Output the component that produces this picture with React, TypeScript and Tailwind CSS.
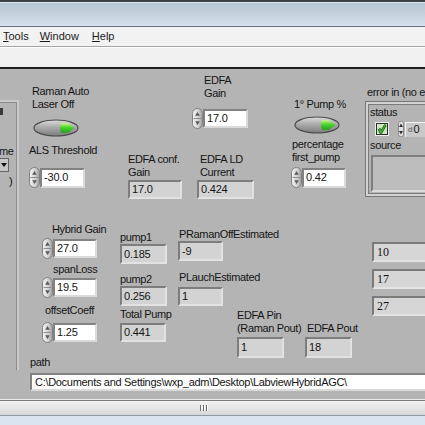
import React from "react";

// LabVIEW-style front panel window

const lbl = "whitespace-nowrap text-[11px] leading-[13px] tracking-[-0.35px] text-[#141414]";
const ctlBox =
  "flex items-center bg-white border-2 border-t-[#828282] border-l-[#828282] border-r-[#dadada] border-b-[#dadada] pl-[2px] text-[11px] leading-[13px] tracking-[-0.2px] text-[#141414] whitespace-nowrap";
const indBox =
  "flex items-center bg-[#d3d3d3] border-2 border-t-[#7d7d7d] border-l-[#7d7d7d] border-r-[#e2e2e2] border-b-[#e2e2e2] pl-[2px] text-[11px] leading-[13px] tracking-[-0.2px] text-[#141414] whitespace-nowrap";
const serifBox =
  "flex items-center w-[70px] h-[20px] bg-[#d6d6d6] border-2 border-t-[#7a7a7a] border-l-[#7a7a7a] border-r-[#e2e2e2] border-b-[#e2e2e2] pl-[3px] font-['Liberation_Serif',serif] text-[12px] leading-[13px] text-[#141414]";

function Spinner() {
  return (
    <svg width="11" height="21" viewBox="0 0 11 21" className="shrink-0">
      <defs>
        <linearGradient id="spinFill" x1="0" y1="0" x2="1" y2="0">
          <stop offset="0" stopColor="#f6f6f6" />
          <stop offset="0.6" stopColor="#cfcfcf" />
          <stop offset="1" stopColor="#9c9c9c" />
        </linearGradient>
      </defs>
      <rect x="0.5" y="0.5" width="10" height="20" rx="5" fill="url(#spinFill)" stroke="#808080" />
      <line x1="1.5" y1="10.5" x2="9.5" y2="10.5" stroke="#8e8e8e" />
      <path d="M5.5 4 L7.8 7.8 L3.2 7.8 Z" fill="#5a5a5a" />
      <path d="M5.5 17 L7.8 13.2 L3.2 13.2 Z" fill="#5a5a5a" />
    </svg>
  );
}

function NumCtl({ box, value }: { box: string; value: string }) {
  return (
    <div className="flex items-center">
      <Spinner />
      <div className={`${ctlBox} ${box}`}>{value}</div>
    </div>
  );
}

function Led() {
  return (
    <svg width="46" height="18" viewBox="0 0 46 18" className="shrink-0">
      <defs>
        <linearGradient id="ledBody" x1="0" y1="0" x2="0" y2="1">
          <stop offset="0" stopColor="#dcdcdc" />
          <stop offset="0.45" stopColor="#ababab" />
          <stop offset="1" stopColor="#7c7c7c" />
        </linearGradient>
        <linearGradient id="ledGreen" x1="0" y1="0" x2="0" y2="1">
          <stop offset="0" stopColor="#c4f58a" />
          <stop offset="0.45" stopColor="#49d52c" />
          <stop offset="1" stopColor="#24a01a" />
        </linearGradient>
      </defs>
      <ellipse cx="23" cy="9" rx="22" ry="8" fill="url(#ledBody)" stroke="#4b4b4b" strokeWidth="1.2" />
      <path d="M28 4.3 C26.6 6.5 26.6 11.5 28 13.7 L35 13.7 L41.5 9 L35 4.3 Z" fill="url(#ledGreen)" />
    </svg>
  );
}

function CheckBox() {
  return (
    <svg width="14" height="14" viewBox="0 0 14 14" className="shrink-0">
      <rect x="0.5" y="0.5" width="13" height="13" fill="#dfe9d8" stroke="#eeeeee" />
      <rect x="1.5" y="1.5" width="11" height="11" fill="#cfe6c2" stroke="#2e2e2e" />
      <path
        d="M3.2 7.6 L5.2 6.4 L6.2 8.3 L9.6 2.6 L11.2 3.6 L6.6 11.6 L5.2 11.6 Z"
        fill="#3cc02d"
        stroke="#174d12"
        strokeWidth="0.8"
        strokeLinejoin="round"
      />
    </svg>
  );
}

function MiniSpin() {
  return (
    <svg width="6" height="16" viewBox="0 0 6 16" className="shrink-0">
      <rect x="0.5" y="0.5" width="5" height="15" rx="2" fill="#e3e3e3" stroke="#8a8a8a" />
      <path d="M3 2.5 L5 6 L1 6 Z" fill="#333" />
      <path d="M3 13.5 L5 10 L1 10 Z" fill="#333" />
    </svg>
  );
}

// one front-panel object: label stacked over its control / indicator,
// dropped at its spot on the panel canvas
function Obj({ pos, children }: { pos: string; children: React.ReactNode }) {
  return <div className={`absolute flex flex-col items-start ${pos}`}>{children}</div>;
}

export default function App() {
  return (
    <div className="w-[425px] h-[425px] overflow-hidden flex flex-col font-['Liberation_Sans',Arial,sans-serif] bg-[#b4b4b4]">
      {/* title bar */}
      <div className="h-[2px] shrink-0 bg-[#3f4347]" />
      <div className="h-[25px] shrink-0 border-b border-[#67717b] bg-gradient-to-b from-[#b3c5d1] to-[#d6e1eb] shadow-[inset_0_1px_0_#dfe8ef]" />

      {/* menu bar */}
      <div className="h-[20px] shrink-0 flex items-center gap-[11px] pl-[3px] bg-[#f2f2f2] border-b border-[#a5a5a5] text-[11px] leading-[13px] text-[#1a1a1a]">
        <span>
          <span className="underline">T</span>ools
        </span>
        <span>
          <span className="underline">W</span>indow
        </span>
        <span className="ml-[2px]">
          <span className="underline">H</span>elp
        </span>
      </div>

      {/* toolbar */}
      <div className="h-[22px] shrink-0 bg-[#f0f0f0] border-t border-t-white border-b-2 border-b-[#1e1e1e]" />

      {/* front panel canvas */}
      <div className="relative h-[330px] shrink-0 bg-[#b4b4b4] overflow-hidden">
        {/* decoration frame on the left, holding a cut-off ring control */}
        <div className="absolute left-[-6px] top-[31px] w-[25px] h-[270px] border-t-2 border-r-2 border-[#cacaca] shadow-[inset_-1px_1px_0_#8c8c8c] flex flex-col items-start pl-[6px] pt-[6px]">
          <div className="w-[3px] h-[7px] bg-[#3a3a3a]" />
          <div className={`${lbl} mt-[30px] ml-[-1px]`}>me</div>
          <div className="ml-[-10px] w-[19px] h-[14px] flex items-center justify-end pr-[1px] border border-[#666666] bg-[#c6c6c6]">
            <svg width="6" height="4" viewBox="0 0 6 4">
              <path d="M0 0 L6 0 L3 4 Z" fill="#111" />
            </svg>
          </div>
          <div className={`${lbl} mt-[3px] ml-[9px]`}>)</div>
        </div>

        <Obj pos="left-[32px] top-[16px] gap-[8px]">
          <div className={lbl}>
            Raman Auto
            <br />
            Laser Off
          </div>
          <div className="ml-[1px]">
            <Led />
          </div>
        </Obj>

        <Obj pos="left-[29px] top-[75px] gap-[10px]">
          <div className={lbl}>ALS Threshold</div>
          <NumCtl box="w-[45px] h-[20px]" value="-30.0" />
        </Obj>

        <Obj pos="left-[192px] top-[5px] gap-[8px]">
          <div className={`${lbl} ml-[12px]`}>
            EDFA
            <br />
            Gain
          </div>
          <NumCtl box="w-[45px] h-[19px]" value="17.0" />
        </Obj>

        <Obj pos="left-[128px] top-[84px] gap-[1px]">
          <div className={lbl}>
            EDFA conf.
            <br />
            Gain
          </div>
          <div className={`${indBox} w-[54px] h-[19px]`}>17.0</div>
        </Obj>

        <Obj pos="left-[197px] top-[84px] gap-[1px]">
          <div className={`${lbl} ml-[3px]`}>
            EDFA LD
            <br />
            Current
          </div>
          <div className={`${indBox} w-[57px] h-[19px]`}>0.424</div>
        </Obj>

        <Obj pos="left-[294px] top-[29px] gap-[5px]">
          <div className={lbl}>1° Pump %</div>
          <Led />
        </Obj>

        <Obj pos="left-[291px] top-[69px] gap-[3px]">
          <div className={`${lbl} ml-[1px]`}>
            percentage
            <br />
            first_pump
          </div>
          <NumCtl box="w-[44px] h-[20px]" value="0.42" />
        </Obj>

        {/* error in cluster */}
        <Obj pos="left-[365px] top-[17px] gap-[2px]">
          <div className={`${lbl} ml-[2px]`}>error in (no error)</div>
          <div className="w-[80px] h-[96px] border border-[#767676] bg-[#d2d2d2] p-[2px]">
            <div className="h-full border border-[#7a7a7a] bg-[#b4b4b4] flex flex-col">
              <div className={`${lbl} pl-[1px] pt-[1px]`}>status</div>
              <div className="flex items-center mt-[2px] ml-[6px]">
                <CheckBox />
                <div className="ml-[9px]">
                  <MiniSpin />
                </div>
                <div className="ml-[1px] h-[15px] w-[30px] flex items-center bg-[#c9c9c9] border-t border-l border-[#f2f2f2] pl-[2px] text-[11px] leading-[13px] text-[#141414]">
                  <span className="text-[8px] text-[#555] mr-[1px]">d</span>0
                </div>
              </div>
              <div className={`${lbl} pl-[1px] mt-[2px]`}>source</div>
              <div className="ml-[2px] mt-[3px] h-[37px] border-2 border-t-[#7f7f7f] border-l-[#7f7f7f] border-r-[#dcdcdc] border-b-[#dcdcdc] bg-[#bdbdbd]" />
            </div>
          </div>
        </Obj>

        {/* hybrid gain inputs */}
        <Obj pos="left-[42px] top-[154px] gap-[2px]">
          <div className={`${lbl} ml-[10px]`}>Hybrid Gain</div>
          <NumCtl box="w-[44px] h-[19px]" value="27.0" />
        </Obj>
        <Obj pos="left-[42px] top-[194px] gap-[1px]">
          <div className={`${lbl} ml-[11px]`}>spanLoss</div>
          <NumCtl box="w-[44px] h-[19px]" value="19.5" />
        </Obj>
        <Obj pos="left-[42px] top-[235px] gap-[5px]">
          <div className={`${lbl} ml-[3px]`}>offsetCoeff</div>
          <NumCtl box="w-[44px] h-[19px]" value="1.25" />
        </Obj>

        {/* pump indicators */}
        <Obj pos="left-[120px] top-[162px] gap-[0px]">
          <div className={lbl}>pump1</div>
          <div className={`${indBox} w-[47px] h-[20px]`}>0.185</div>
        </Obj>
        <Obj pos="left-[120px] top-[204px] gap-[0px]">
          <div className={lbl}>pump2</div>
          <div className={`${indBox} w-[47px] h-[20px]`}>0.256</div>
        </Obj>
        <Obj pos="left-[120px] top-[239px] gap-[2px]">
          <div className={lbl}>Total Pump</div>
          <div className={`${indBox} w-[46px] h-[19px]`}>0.441</div>
        </Obj>

        {/* estimates */}
        <Obj pos="left-[178px] top-[159px] gap-[0px]">
          <div className={`${lbl} ml-[1px]`}>PRamanOffEstimated</div>
          <div className={`${indBox} w-[45px] h-[20px]`}>-9</div>
        </Obj>
        <Obj pos="left-[178px] top-[202px] gap-[3px]">
          <div className={`${lbl} ml-[1px]`}>PLauchEstimated</div>
          <div className={`${indBox} w-[45px] h-[19px]`}>1</div>
        </Obj>

        {/* EDFA pin / pout */}
        <Obj pos="left-[237px] top-[240px] gap-[2px]">
          <div className={lbl}>
            EDFA Pin
            <br />
            (Raman Pout)
          </div>
          <div className={`${indBox} w-[47px] h-[21px]`}>1</div>
        </Obj>
        <Obj pos="left-[305px] top-[253px] gap-[2px]">
          <div className={`${lbl} ml-[2px]`}>EDFA Pout</div>
          <div className={`${indBox} w-[47px] h-[21px]`}>18</div>
        </Obj>

        {/* unlabelled indicators on the right */}
        <Obj pos="left-[372px] top-[173px] gap-[7px]">
          <div className={serifBox}>10</div>
          <div className={serifBox}>17</div>
          <div className={serifBox}>27</div>
        </Obj>

        {/* path */}
        <Obj pos="left-[30px] top-[287px] gap-[4px]">
          <div className={lbl}>path</div>
          <div className="w-[420px] h-[18px] flex items-center bg-white border-2 border-t-[#828282] border-l-[#828282] border-r-[#dadada] border-b-[#dadada] pl-[3px] text-[11px] leading-[13px] tracking-[-0.3px] text-[#141414] whitespace-nowrap">
            C:\Documents and Settings\wxp_adm\Desktop\LabviewHybridAGC\
          </div>
        </Obj>
      </div>

      {/* horizontal scrollbar */}
      <div className="h-[1px] shrink-0 bg-[#ededed]" />
      <div className="h-[1px] shrink-0 bg-[#7c7c7c]" />
      <div className="h-[14px] shrink-0 flex items-center pl-[200px] gap-[2px] bg-gradient-to-b from-[#f3f3f3] to-[#d7d7d7]">
        <span className="w-[1px] h-[6px] bg-[#6e6e6e] shadow-[1px_0_0_#ffffff]" />
        <span className="w-[1px] h-[6px] bg-[#6e6e6e] shadow-[1px_0_0_#ffffff]" />
        <span className="w-[1px] h-[6px] bg-[#6e6e6e] shadow-[1px_0_0_#ffffff]" />
      </div>
      <div className="h-[1px] shrink-0 bg-[#8e99a4]" />
      <div className="flex-1 bg-[#d9e4f0]" />
    </div>
  );
}
